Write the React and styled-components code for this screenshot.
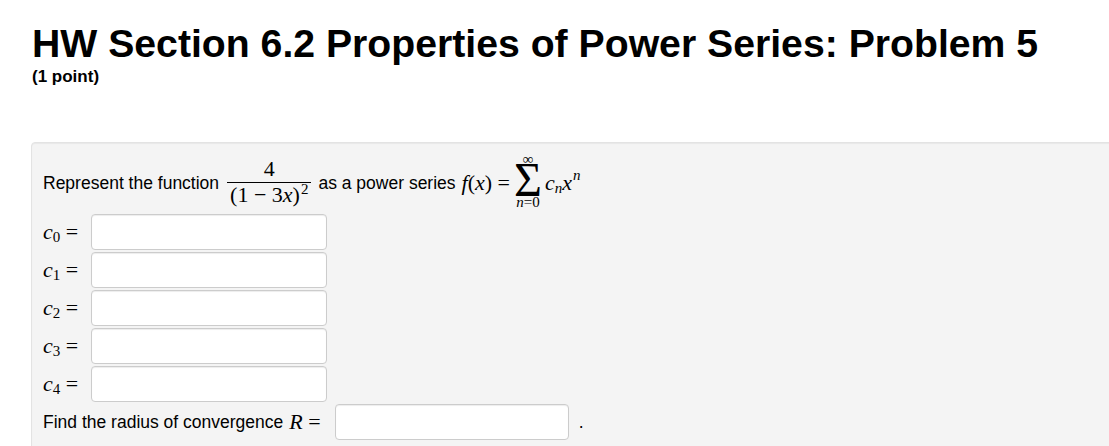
import React from 'react'
import styled, { createGlobalStyle } from 'styled-components'

const GlobalStyle = createGlobalStyle`
  body {
    margin: 0;
    background: #fff;
    font-family: "Liberation Sans", Arial, sans-serif;
    overflow: hidden;
  }
`

const Root = styled.div`
  display: flex;
  flex-direction: column;
  width: 1109px;
  height: 446px;
  overflow: hidden;
`

const Header = styled.div`
  display: flex;
  flex-direction: column;
  padding: 21px 0 0 32px;
`

const Title = styled.h1`
  margin: 0;
  font-size: 39.2px;
  line-height: 46px;
  font-weight: bold;
  color: #000;
`

const Points = styled.div`
  font-size: 17px;
  font-weight: bold;
  line-height: 20px;
  color: #000;
`

const Panel = styled.div`
  margin: 55px -20px 0 31px;
  flex: 1;
  background: #f4f4f4;
  border: 1px solid #e3e3e3;
  border-radius: 4px;
  box-shadow: inset 0 1px 1px rgba(0, 0, 0, 0.05);
  padding: 11px 11px;
  display: flex;
  flex-direction: column;
  color: #000;
  font-size: 17.5px;
`

const Statement = styled.div`
  display: flex;
  align-items: center;
  height: 58px;
  margin-bottom: 2px;
`

const Math = styled.span`
  font-family: "Liberation Serif", "Times New Roman", serif;
  font-size: 22px;
  display: inline-flex;
  align-items: center;
  margin: ${p => p.$m || '0'};
`

const It = styled.i`
  font-style: italic;
`

const Sub = styled.span`
  font-size: 15px;
  position: relative;
  top: 5px;
  font-style: ${p => (p.$it ? 'italic' : 'normal')};
`

const Sup = styled.span`
  font-size: 15px;
  position: relative;
  top: -8px;
  margin-left: 1px;
  font-style: ${p => (p.$it ? 'italic' : 'normal')};
`

const Fraction = styled.span`
  display: inline-flex;
  flex-direction: column;
  align-items: center;
  margin: 0 7px 0 8px;
  font-family: "Liberation Serif", "Times New Roman", serif;
  font-size: 22px;
`

const Numer = styled.span`
  padding: 0 2px 2px;
  line-height: 22px;
`

const Denom = styled.span`
  border-top: 1px solid #000;
  padding: 0 3px 0;
  line-height: 24px;
`

const Sum = styled.span`
  display: inline-flex;
  flex-direction: column;
  align-items: center;
  margin: 0 3px 4px 4px;
`

const Limit = styled.span`
  font-size: 15px;
  line-height: 13px;
  margin: ${p => p.$m || '0'};
  font-style: ${p => (p.$it ? 'italic' : 'normal')};
`

const Sigma = styled.span`
  font-size: 48px;
  line-height: 34px;
  height: 34px;
`

const Rows = styled.div`
  display: flex;
  flex-direction: column;
  gap: 2px;
`

const Row = styled.div`
  display: flex;
  align-items: center;
`

const Label = styled.span`
  width: 48px;
  display: flex;
  align-items: center;
  font-family: "Liberation Serif", "Times New Roman", serif;
  font-size: 22px;
`

const Input = styled.input`
  box-sizing: border-box;
  width: ${p => p.$w || 236}px;
  height: 36px;
  border: 1px solid #ccc;
  border-radius: 4px;
  background: #fff;
  box-shadow: inset 0 1px 1px rgba(0, 0, 0, 0.075);
  outline: none;
  margin: 0;
  padding: 4px 6px;
  font-size: 16px;
`

const Period = styled.span`
  margin-left: 10px;
`

const coefs = [0, 1, 2, 3, 4]

const App = () => {
  return (
    <Root>
      <GlobalStyle />
      <Header>
        <Title>HW Section 6.2 Properties of Power Series: Problem 5</Title>
        <Points>(1 point)</Points>
      </Header>
      <Panel>
        <Statement>
          <span>Represent the function</span>
          <Fraction>
            <Numer>4</Numer>
            <Denom>
              (1 − 3<It>x</It>)<Sup>2</Sup>
            </Denom>
          </Fraction>
          <span>as a power series</span>
          <Math $m="0 0 0 6px">
            <It>f</It>(<It>x</It>)&nbsp;=
            <Sum>
              <Limit $m="0 0 -3px">∞</Limit>
              <Sigma>Σ</Sigma>
              <Limit $it $m="-1px 0 0">n<span style={{ fontStyle: 'normal' }}>=0</span></Limit>
            </Sum>
            <It>c</It>
            <Sub $it>n</Sub>
            <It>x</It>
            <Sup $it>n</Sup>
          </Math>
        </Statement>
        <Rows>
          {coefs.map(n => (
            <Row key={n}>
              <Label>
                <It>c</It>
                <Sub>{n}</Sub>&nbsp;=
              </Label>
              <Input type="text" />
            </Row>
          ))}
          <Row>
            <span>Find the radius of convergence</span>
            <Math $m="0 14px 0 6px">
              <It>R</It>&nbsp;=
            </Math>
            <Input type="text" $w={234} />
            <Period>.</Period>
          </Row>
        </Rows>
      </Panel>
    </Root>
  )
}

export default App
